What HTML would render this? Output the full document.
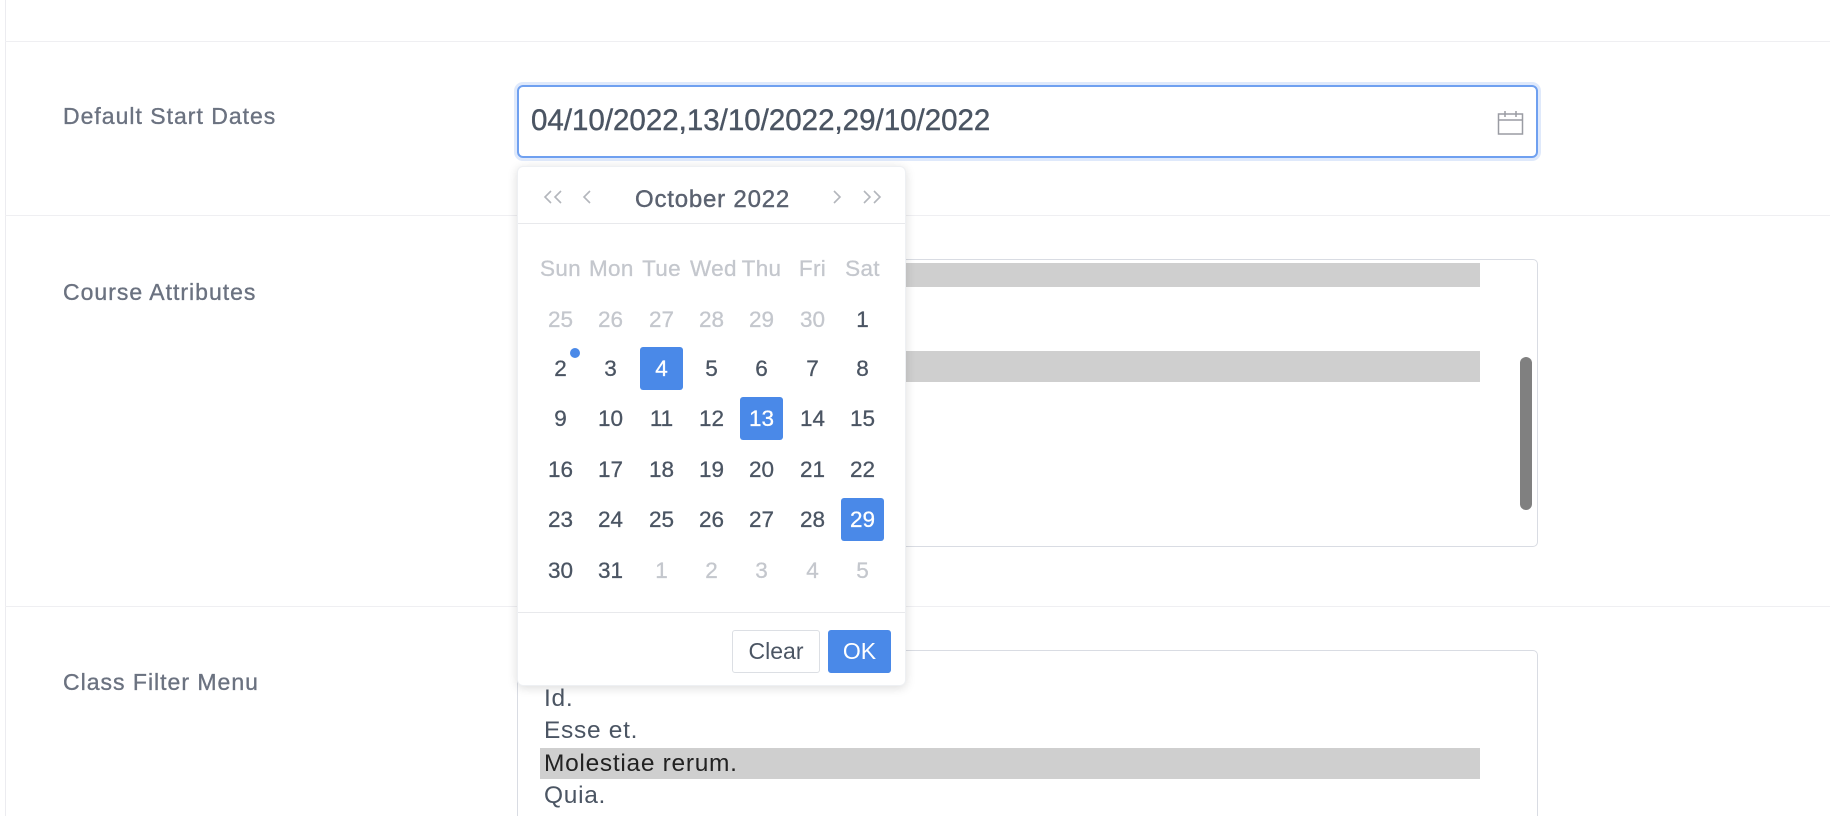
<!DOCTYPE html>
<html style="width:1830px;height:816px;overflow:hidden"><head><style>
*{box-sizing:border-box;margin:0;padding:0}
body{width:1830px;height:816px;background:#fff;font-family:"Liberation Sans",sans-serif;position:relative;overflow:hidden}
.a{position:absolute}
.lbl{color:#6b7280;font-size:23px;left:63px;letter-spacing:1px;-webkit-text-stroke:0.35px #6b7280}
.d{position:absolute;width:43px;height:43px;line-height:43px;text-align:center;font-size:22.5px;color:#4b5563;border-radius:3px;-webkit-text-stroke:0.3px currentColor}
.g{color:#c4c7cd}
.s{background:#4a89e8;color:#fff}
.it{position:absolute;left:544px;font-size:24.5px;color:#4b5563;letter-spacing:0.7px}
</style></head><body>
<div class="a" style="left:5px;top:0;width:1px;height:816px;background:#ececf0"></div>
<div class="a" style="left:5px;top:41px;right:0;height:1px;background:#efeff2"></div>
<div class="a" style="left:5px;top:215px;right:0;height:1px;background:#efeff2"></div>
<div class="a" style="left:5px;top:606px;right:0;height:1px;background:#efeff2"></div>
<div class="a lbl" style="top:103px">Default Start Dates</div>
<div class="a lbl" style="top:279px">Course Attributes</div>
<div class="a lbl" style="top:669px">Class Filter Menu</div>

<div class="a" style="left:517px;top:85px;width:1021px;height:73px;border:2px solid #6fa0f0;border-radius:6px;box-shadow:0 0 0 3px #dfe9fb"></div>
<div class="a" style="left:531px;top:104px;font-size:29.5px;color:#4b5563;-webkit-text-stroke:0.4px #4b5563">04/10/2022,13/10/2022,29/10/2022</div>
<svg class="a" style="left:1497px;top:110px" width="27" height="26" viewBox="0 0 27 26" fill="none" stroke="#9a9ca3" stroke-width="1.5"><rect x="1.5" y="4" width="24" height="20"/><line x1="1.5" y1="10" x2="25.5" y2="10"/><line x1="8" y1="1" x2="8" y2="7"/><line x1="19" y1="1" x2="19" y2="7"/></svg>

<div class="a" style="left:517px;top:259px;width:1021px;height:288px;border:1px solid #d9dce3;border-radius:5px"></div>
<div class="a" style="left:906px;top:263px;width:574px;height:24px;background:#cfcfcf"></div>
<div class="a" style="left:906px;top:351px;width:574px;height:31px;background:#cfcfcf"></div>
<div class="a" style="left:1520px;top:357px;width:12px;height:153px;background:#808080;border-radius:6px"></div>

<div class="a" style="left:517px;top:650px;width:1021px;height:180px;border:1px solid #d9dce3;border-radius:5px"></div>
<div class="it" style="top:685px">Id.</div>
<div class="it" style="top:717px">Esse et.</div>
<div class="a" style="left:540px;top:748px;width:940px;height:31px;background:#cfcfcf"></div>
<div class="it" style="top:750px;color:#222">Molestiae rerum.</div>
<div class="it" style="top:782px">Quia.</div>

<div class="a" style="left:517px;top:166px;width:389px;height:520px;background:#fff;border-radius:6px;box-shadow:0 2px 10px rgba(0,0,0,.14);border:1px solid #eef0f3">
<svg class="a" style="left:24px;top:22px" width="24" height="16" viewBox="0 0 24 16" fill="none" stroke="#b3b6bc" stroke-width="1.6"><path d="M9 2L3 8l6 6M19 2l-6 6 6 6"/></svg>
<svg class="a" style="left:64px;top:22px" width="12" height="16" viewBox="0 0 12 16" fill="none" stroke="#b3b6bc" stroke-width="1.6"><path d="M8 2L2 8l6 6"/></svg>
<div class="a" style="left:0;width:389px;top:19px;text-align:center;font-size:24px;color:#5b6270;letter-spacing:0.8px;-webkit-text-stroke:0.4px #5b6270">October 2022</div>
<svg class="a" style="left:312px;top:22px" width="12" height="16" viewBox="0 0 12 16" fill="none" stroke="#b3b6bc" stroke-width="1.6"><path d="M4 2l6 6-6 6"/></svg>
<svg class="a" style="left:341px;top:22px" width="24" height="16" viewBox="0 0 24 16" fill="none" stroke="#b3b6bc" stroke-width="1.6"><path d="M5 2l6 6-6 6M15 2l6 6-6 6"/></svg>
<div class="a" style="left:0;right:0;top:56px;height:1px;background:#e8e9ec"></div>
<div class="a" style="left:0;right:0;top:445px;height:1px;background:#e8e9ec"></div>
<div class="a" style="left:214px;top:463px;width:88px;height:43px;border:1px solid #dcdfe4;border-radius:3px;text-align:center;line-height:41px;font-size:23px;color:#4b5563">Clear</div>
<div class="a" style="left:310px;top:463px;width:63px;height:43px;background:#4a89e8;border-radius:3px;text-align:center;line-height:43px;font-size:23px;color:#fff">OK</div>
<div id="grid"></div>
</div>
<script>
var xs=[560,610,661,711,761,812,862],ys=[319,368,418,469,519,570];
var h='';var names=['Sun','Mon','Tue','Wed','Thu','Fri','Sat'];
for(var i=0;i<7;i++)h+='<div class="d g" style="left:'+(xs[i]-517-22)+'px;top:'+(268-166-22)+'px;letter-spacing:0.3px">'+names[i]+'</div>';
var days=[25,26,27,28,29,30,1];for(var d=2;d<=31;d++)days.push(d);for(d=1;d<=5;d++)days.push(d);
for(var k=0;k<42;k++){var r=Math.floor(k/7),c=k%7,cl='d';if(k<6||k>=37)cl+=' g';var v=days[k];if(k>=6&&k<37&&(v==4||v==13||v==29))cl+=' s';
h+='<div class="'+cl+'" style="left:'+(xs[c]-517-22)+'px;top:'+(ys[r]-166-22)+'px">'+v+'</div>';}
h+='<div class="a" style="left:'+(574-517-5)+'px;top:'+(352-166-5)+'px;width:10px;height:10px;border-radius:5px;background:#4a89e8"></div>';
document.getElementById('grid').innerHTML=h;
</script>
</body></html>
